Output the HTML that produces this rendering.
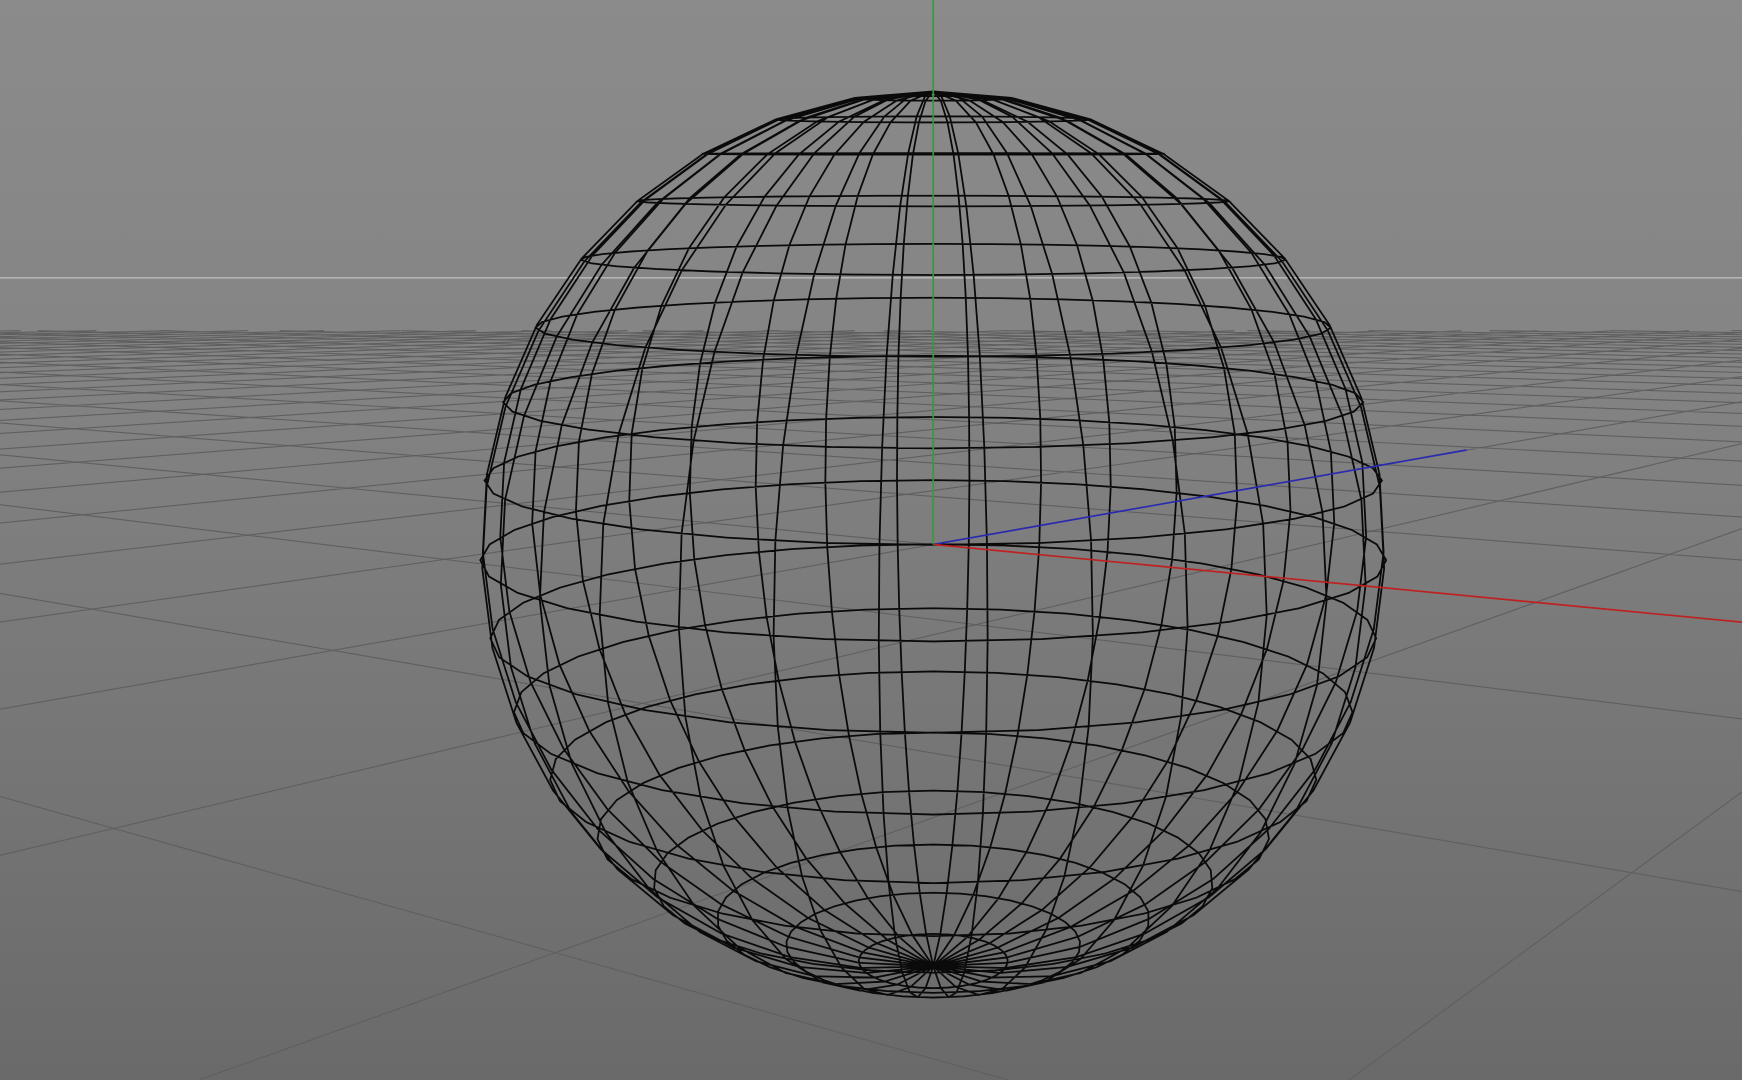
<!DOCTYPE html>
<html><head><meta charset="utf-8"><style>
html,body{margin:0;padding:0;width:1742px;height:1080px;overflow:hidden;background:#7c7c7c}
svg{display:block;position:absolute;left:0;top:0}
</style></head><body>
<svg id="s" width="1742" height="1080" viewBox="0 0 1568 972" preserveAspectRatio="none">
<defs><linearGradient id="bg" x1="0" y1="0" x2="0" y2="1">
<stop offset="0" stop-color="#8b8b8b"/><stop offset="0.3" stop-color="#858585"/><stop offset="1" stop-color="#6a6a6a"/></linearGradient></defs>
<rect width="1568" height="972" fill="url(#bg)"/>
<g id="grid" stroke="#5f5f5f" stroke-width="1" fill="none"></g>
<line x1="0" y1="250" x2="1568" y2="250" stroke="#b4b4b4" stroke-width="1.5"/>
<g id="sph" stroke="#0a0a0a" stroke-width="1.6" fill="none"></g>
<line x1="840" y1="0" x2="840" y2="490" stroke="#2fa02f" stroke-width="1.5"/>
<line x1="840" y1="490" x2="1320" y2="405" stroke="#2a2ab0" stroke-width="1.5"/>
<line x1="840" y1="490" x2="1568" y2="560" stroke="#c02020" stroke-width="1.5"/>
</svg>
<script>
(function(){
var f=1000,hz=250,cx=840,Z0=1000/240;
function P(x,z){return [cx+f*x/z,hz+f/z];}
function norm(v){var l=Math.hypot(v[0],v[1]);return [v[0]/l,v[1]/l];}
var d1=norm([2.35,-0.94]),d2=norm([3.1,2.28]);
var s='';
var zmin=0.25,zmax=21;
function seg(o,d){
 var t0=-200,t1=200;
 if(Math.abs(d[1])<1e-6){if(o[1]<zmin||o[1]>zmax)return;}
 else{var a=(zmin-o[1])/d[1],b=(zmax-o[1])/d[1];var lo=Math.min(a,b),hi=Math.max(a,b);t0=Math.max(t0,lo);t1=Math.min(t1,hi);if(t0>=t1)return;}
 t0=Math.max(t0,-60);t1=Math.min(t1,60);if(t0>=t1)return;
 var A=P(o[0]+t0*d[0],o[1]+t0*d[1]),B=P(o[0]+t1*d[0],o[1]+t1*d[1]);
 s+='M'+A[0].toFixed(1)+' '+A[1].toFixed(1)+'L'+B[0].toFixed(1)+' '+B[1].toFixed(1);
}
for(var i=-40;i<=40;i++){
 seg([i*d2[0],Z0+i*d2[1]],d1);
 seg([i*d1[0],Z0+i*d1[1]],d2);
}
document.getElementById('grid').innerHTML='<path d="'+s+'"/>';
var hc=0.85,D=4.8;
var C=[0,hc,D];
var fw=[-C[0],-C[1],-C[2]];var l=Math.hypot(fw[0],fw[1],fw[2]);fw=[fw[0]/l,fw[1]/l,fw[2]/l];
var rt=[1,0,0];
var up=[rt[1]*fw[2]-rt[2]*fw[1],rt[2]*fw[0]-rt[0]*fw[2],rt[0]*fw[1]-rt[1]*fw[0]];
if(up[1]<0)up=[-up[0],-up[1],-up[2]];
function pr(p){var v=[p[0]-C[0],p[1]-C[1],p[2]-C[2]];
 var z=v[0]*fw[0]+v[1]*fw[1]+v[2]*fw[2];
 return [(v[0]*rt[0]+v[1]*rt[1]+v[2]*rt[2])/z,-(v[0]*up[0]+v[1]*up[1]+v[2]*up[2])/z];}
function W(phi,th){return [Math.cos(phi)*Math.sin(th),Math.sin(phi),Math.cos(phi)*Math.cos(th)];}
var minY=1e9,maxY=-1e9;
for(var i=0;i<=180;i++)for(var j=0;j<360;j+=2){var q=pr(W(-Math.PI/2+i*Math.PI/180,j*Math.PI/180));
 if(q[1]<minY)minY=q[1];if(q[1]>maxY)maxY=q[1];}
var k=(898-82)/(maxY-minY);
function S(phi,th){var q=pr(W(phi,th));return [840+q[0]*k,82+(q[1]-minY)*k];}
var NL=18,NM=32,ss='';
for(var i=1;i<NL;i++){
 var phi=-Math.PI/2+i*Math.PI/NL;
 for(var j=0;j<=NM;j++){var p=S(phi,j*2*Math.PI/NM);ss+=(j?'L':'M')+p[0].toFixed(1)+' '+p[1].toFixed(1);}
}
for(var j=0;j<NM;j++){
 var th=j*2*Math.PI/NM+Math.PI/NM;
 for(var i=0;i<=NL;i++){var p=S(-Math.PI/2+i*Math.PI/NL,th);ss+=(i?'L':'M')+p[0].toFixed(1)+' '+p[1].toFixed(1);}
}
document.getElementById('sph').innerHTML='<path d="'+ss+'"/>';
})();
</script>
</body></html>
